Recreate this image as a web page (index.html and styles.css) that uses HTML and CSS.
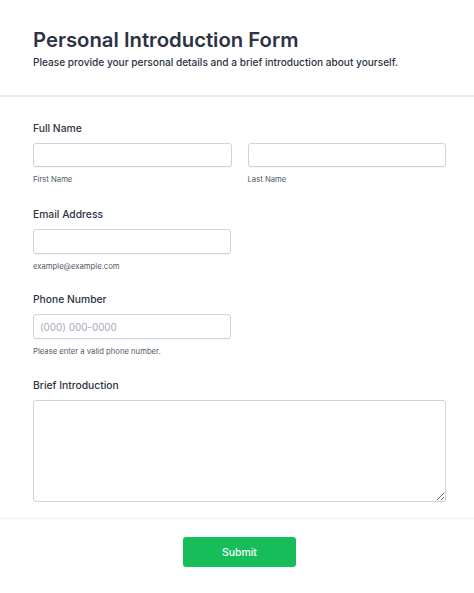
FILE: index.html
```html
<!DOCTYPE html>
<html lang="en">
<head>
<meta charset="utf-8">
<title>Personal Introduction Form</title>
<link rel="stylesheet" href="styles.css">
</head>
<body>
<form class="form">
  <header class="form-header">
    <h1 class="form-title">Personal Introduction Form</h1>
    <p class="form-subtitle">Please provide your personal details and a brief introduction about yourself.</p>
  </header>
  <div class="form-body">
    <div class="field">
      <label class="field-label">Full Name</label>
      <div class="name-row">
        <div class="name-col">
          <input class="input" type="text">
          <span class="sublabel">First Name</span>
        </div>
        <div class="name-col">
          <input class="input" type="text">
          <span class="sublabel">Last Name</span>
        </div>
      </div>
    </div>
    <div class="field field-email">
      <label class="field-label">Email Address</label>
      <input class="input input-half" type="email">
      <span class="sublabel">example@example.com</span>
    </div>
    <div class="field field-phone">
      <label class="field-label">Phone Number</label>
      <input class="input input-half" type="tel" placeholder="(000) 000-0000">
      <span class="sublabel">Please enter a valid phone number.</span>
    </div>
    <div class="field field-last">
      <label class="field-label">Brief Introduction</label>
      <textarea class="textarea"></textarea>
    </div>
  </div>
  <footer class="form-footer">
    <button class="submit" type="button">Submit</button>
  </footer>
</form>
</body>
</html>
```
FILE: styles.css
```css
* { box-sizing: border-box; }
html, body {
  margin: 0;
  padding: 0;
  background: #ffffff;
}
body {
  font-family: Inter, "Noto Sans", "Liberation Sans", sans-serif;
  color: #2c3345;
}
.form {
  width: 474px;
}
.form-header {
  padding: 26px 28px 26px 33px;
  border-bottom: 2px solid #eaebf0;
}
.form-title {
  margin: 0;
  font-size: 20.3px;
  line-height: 28px;
  font-weight: 600;
  color: #2c3345;
}
.form-subtitle {
  margin: 1px 0 0;
  font-size: 10.1px;
  line-height: 14px;
  font-weight: 500;
  color: #2c3345;
}
.form-body {
  padding: 23px 28px 16px 33px;
  border-bottom: 1px solid #f0f1f4;
}
.field {
  display: flex;
  flex-direction: column;
  align-items: flex-start;
  margin-bottom: 20px;
}
.field-email { margin-bottom: 18px; }
.field-phone { margin-bottom: 19px; }
.field-last { margin-bottom: 0; }
.field-label {
  font-size: 10.3px;
  line-height: 16px;
  font-weight: 500;
  color: #2c3345;
  margin-bottom: 7px;
}
.name-row {
  display: flex;
  gap: 16px;
  width: 413px;
}
.name-col {
  flex: 1;
  display: flex;
  flex-direction: column;
}
.input {
  display: block;
  width: 100%;
  height: 24px;
  border: 1px solid #cfd3db;
  border-radius: 3px;
  background: #fff;
  padding: 0 6px;
  font-family: inherit;
  font-size: 9.9px;
  color: #2c3345;
  outline: none;
  box-shadow: 0 1px 1px rgba(0, 0, 0, 0.04);
}
.input-half { width: 198px; height: 25px; }
.input::placeholder { color: #a4abbb; }
.sublabel {
  margin-top: 7px;
  font-size: 7.7px;
  line-height: 12px;
  color: #505a6b;
}
.textarea {
  display: block;
  width: 413px;
  height: 102px;
  border: 1px solid #cfd3db;
  border-radius: 3px;
  background: #fff;
  font-family: inherit;
  outline: none;
  resize: vertical;
}
.form-footer {
  display: flex;
  justify-content: center;
  padding: 18px 28px 26px 33px;
}
.submit {
  width: 113px;
  height: 30px;
  border: none;
  border-radius: 3px;
  background: #18bd5b;
  color: #ffffff;
  font-family: inherit;
  font-size: 10.4px;
  font-weight: 500;
  cursor: pointer;
}
```
